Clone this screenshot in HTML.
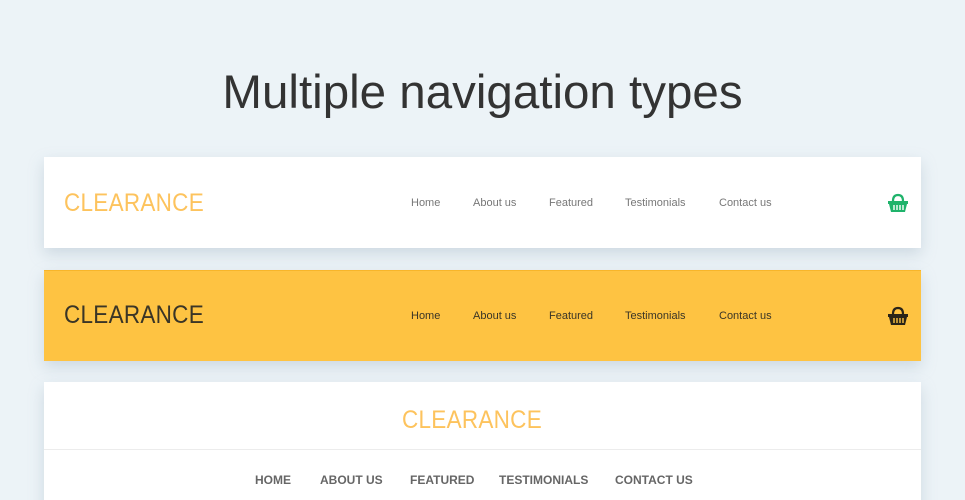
<!DOCTYPE html>
<html><head><meta charset="utf-8"><style>
*{margin:0;padding:0;box-sizing:border-box}
html,body{width:965px;height:500px;overflow:hidden}
body{background:#ecf3f7;font-family:"Liberation Sans",sans-serif;position:relative}
.t{position:absolute;white-space:nowrap}
.card{position:absolute;left:44px;width:877px;box-shadow:0 6px 14px rgba(150,170,185,.35)}
.nav{position:absolute;font-size:11px;color:#777;white-space:nowrap;line-height:12px}
.logo{position:absolute;font-size:25px;letter-spacing:0.3px;line-height:26px;white-space:nowrap;transform:scaleX(0.9);transform-origin:left center}
.b{position:absolute;font-size:12px;font-weight:bold;color:#666;white-space:nowrap;line-height:14px}
</style></head><body>
<div style="position:absolute;left:950px;top:-40px;width:60px;height:42px;border-bottom:2px solid #fdc13c;border-radius:0 0 50% 50%"></div>
<div class="t" style="left:0;width:965px;text-align:center;top:64px;font-size:47.5px;color:#333;line-height:58px">Multiple navigation types</div>

<div class="card" style="top:157px;height:91px;background:#fff"></div>
<div class="logo" style="left:64px;top:190px;color:#fdc35d">CLEARANCE</div>
<div class="nav" style="left:411px;top:197px">Home</div>
<div class="nav" style="left:473px;top:197px">About us</div>
<div class="nav" style="left:549px;top:197px">Featured</div>
<div class="nav" style="left:625px;top:197px">Testimonials</div>
<div class="nav" style="left:719px;top:197px">Contact us</div>
<svg style="position:absolute;left:887px;top:193px" width="22" height="20" viewBox="0 0 22 20"><path d="M6 8 Q6 2 11 2 Q16 2 16 8" fill="none" stroke="#1fb36b" stroke-width="2.2"/><path d="M1 8h20v3h-1l-2 8H4L2 11H1z" fill="#1fb36b"/><path d="M7 12v5M10 12v5M13 12v5M16 12v5" stroke="#fff" stroke-width="1.4"/></svg>

<div class="card" style="top:270px;height:91px;background:#fec342;border-top:1px solid #f7b52a"></div>
<div class="logo" style="left:64px;top:302px;color:#3a3526">CLEARANCE</div>
<div class="nav" style="left:411px;top:310px;color:#3a3526">Home</div>
<div class="nav" style="left:473px;top:310px;color:#3a3526">About us</div>
<div class="nav" style="left:549px;top:310px;color:#3a3526">Featured</div>
<div class="nav" style="left:625px;top:310px;color:#3a3526">Testimonials</div>
<div class="nav" style="left:719px;top:310px;color:#3a3526">Contact us</div>
<svg style="position:absolute;left:887px;top:306px" width="22" height="20" viewBox="0 0 22 20"><path d="M6 8 Q6 2 11 2 Q16 2 16 8" fill="none" stroke="#2a2418" stroke-width="2.2"/><path d="M1 8h20v3h-1l-2 8H4L2 11H1z" fill="#2a2418"/><path d="M7 12v5M10 12v5M13 12v5M16 12v5" stroke="#fec342" stroke-width="1.4"/></svg>

<div class="card" style="top:382px;height:130px;background:#fff"></div>
<div style="position:absolute;left:44px;top:449px;width:877px;height:1px;background:#ececec"></div>
<div class="logo" style="left:402px;top:407px;color:#fdc35d">CLEARANCE</div>
<div class="b" style="left:255px;top:473px">HOME</div>
<div class="b" style="left:320px;top:473px">ABOUT US</div>
<div class="b" style="left:410px;top:473px">FEATURED</div>
<div class="b" style="left:499px;top:473px">TESTIMONIALS</div>
<div class="b" style="left:615px;top:473px">CONTACT US</div>
</body></html>
